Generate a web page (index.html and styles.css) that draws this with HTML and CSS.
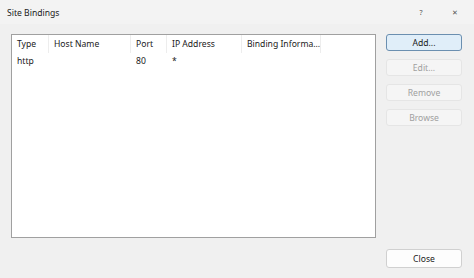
FILE: index.html
```html
<!DOCTYPE html>
<html lang="en">
<head>
  <meta charset="UTF-8">
  <title>Site Bindings</title>
  <link rel="stylesheet" href="styles.css">
</head>
<body>
  <div class="window">
    <div class="titlebar">
      <span class="title">Site Bindings</span>
      <span class="tb-btn">?</span>
      <span class="tb-btn close-x">&#x2715;</span>
    </div>
    <div class="content">
      <div class="listbox">
        <div class="row header">
          <div class="col c-type">Type</div>
          <div class="col c-host">Host Name</div>
          <div class="col c-port">Port</div>
          <div class="col c-ip">IP Address</div>
          <div class="col c-info">Binding Informa...</div>
        </div>
        <div class="row">
          <div class="col c-type">http</div>
          <div class="col c-host"></div>
          <div class="col c-port">80</div>
          <div class="col c-ip">*</div>
          <div class="col c-info"></div>
        </div>
      </div>
      <div class="buttons">
        <div class="btn primary">Add...</div>
        <div class="btn disabled">Edit...</div>
        <div class="btn disabled">Remove</div>
        <div class="btn disabled">Browse</div>
        <div class="spacer"></div>
        <div class="btn close-btn">Close</div>
      </div>
    </div>
  </div>
</body>
</html>
```

FILE: styles.css
```css
body {
  margin: 0;
  font-family: "Noto Sans", "Open Sans", sans-serif;
  font-size: 8.6px;
  color: #1a1a1a;
  background: #f0f0f0;
  height: 278px;
  overflow: hidden;
}
.window {
  height: 278px;
  display: flex;
  flex-direction: column;
  background: #f0f0f0;
}
.titlebar {
  height: 24px;
  display: flex;
  align-items: center;
  padding-left: 7px;
  background: #f3f3f3;
}
.title {
  flex: 1;
  padding-top: 1px;
}
.tb-btn {
  width: 34px;
  text-align: center;
  font-size: 7px;
  color: #555;
}
.close-x {
  margin-right: 2px;
}
.content {
  flex: 1;
  display: flex;
  padding: 10px 12px 11px 11px;
  gap: 10px;
}
.listbox {
  width: 363px;
  height: 202px;
  background: #fff;
  border: 1px solid #a0a0a0;
}
.row {
  display: flex;
  height: 16px;
  align-items: center;
}
.row.header {
  height: 18px;
}
.col {
  padding-left: 5px;
  box-sizing: border-box;
  height: 100%;
  display: flex;
  align-items: center;
  white-space: nowrap;
}
.header .col {
  border-right: 1px solid #ededed;
}
.c-type { width: 37px; }
.c-host { width: 82px; }
.c-port { width: 36px; }
.c-ip { width: 75px; }
.c-info { width: 79px; }
.buttons {
  width: 76px;
  display: flex;
  flex-direction: column;
  gap: 8px;
}
.btn {
  height: 17px;
  box-sizing: border-box;
  border: 1px solid #d0d0d0;
  border-radius: 3px;
  background: #fdfdfd;
  display: flex;
  align-items: center;
  justify-content: center;
}
.btn.primary {
  background: #e0eef9;
  border-color: #6b8fb0;
}
.btn.disabled {
  color: #a0a0a0;
  background: #f5f5f5;
  border-color: #e5e5e5;
}
.btn.close-btn {
  height: 19px;
  margin-bottom: -1px;
}
.spacer {
  flex: 1;
}
```
